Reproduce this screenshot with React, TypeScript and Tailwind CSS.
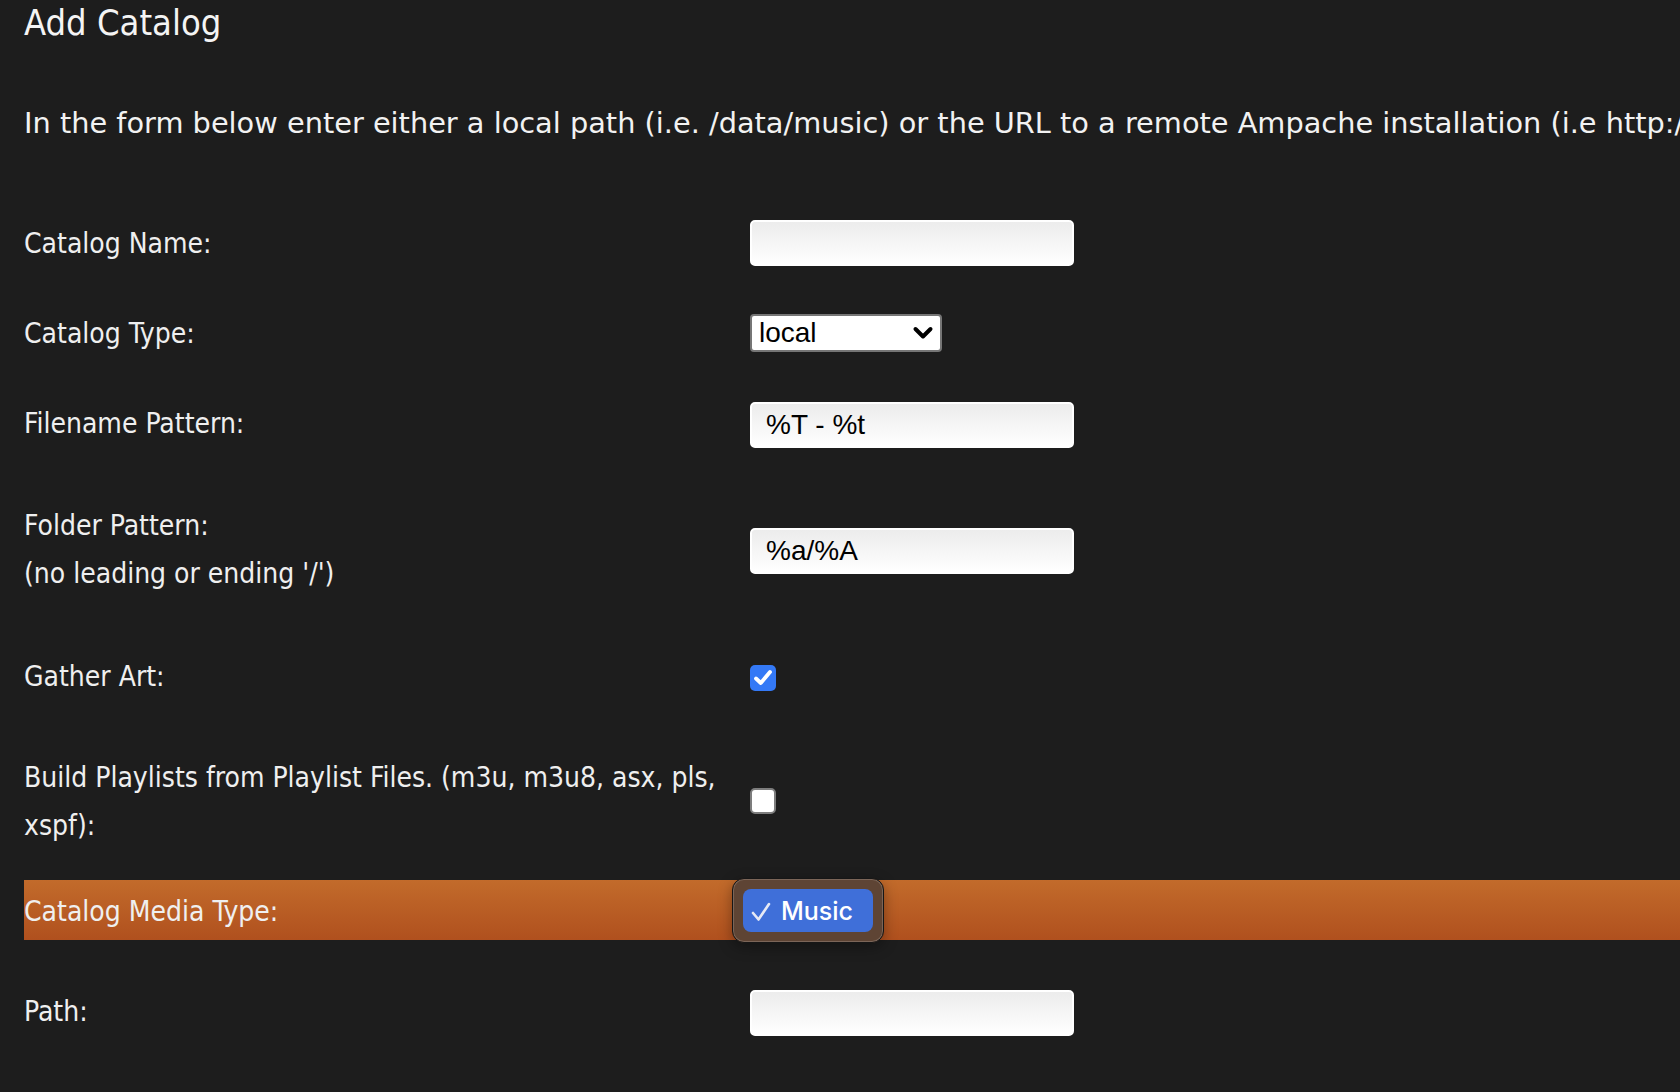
import React from 'react';

const labelFont = { fontFamily: '"DejaVu Sans Condensed", "DejaVu Sans", sans-serif' };
const bodyFont = { fontFamily: '"DejaVu Sans", sans-serif' };
const fieldFont = { fontFamily: '"Liberation Sans", Arial, sans-serif' };

const TextField: React.FC<{ value?: string; className?: string }> = ({ value = '', className = 'mt-[6px]' }) => (
  <div
    className={`w-[324px] h-[46px] rounded-[5px] border-2 border-white bg-gradient-to-b from-[#ececec] to-white px-[14px] flex items-center text-[28px] text-black ${className}`}
    style={fieldFont}
  >
    {value}
  </div>
);

const Row: React.FC<{ h: string; label: React.ReactNode; children?: React.ReactNode; highlight?: boolean }> = ({
  h,
  label,
  children,
  highlight,
}) => (
  <div
    className={`flex items-center ${h} ${highlight ? 'bg-gradient-to-b from-[#c26b2b] to-[#b0501e]' : ''}`}
  >
    <div className="w-[726px] shrink-0 mt-[4px] pr-[12px] text-[28px] leading-[48px] text-[#efefef]" style={labelFont}>
      {label}
    </div>
    <div className="flex items-center">{children}</div>
  </div>
);

export default function App() {
  return (
    <div className="w-full h-screen overflow-hidden bg-[#1d1d1d] pl-[24px]">
      {/* Title */}
      <h2 className="pt-[5px] text-[36px] leading-[35px] text-[#f4f4f4]" style={labelFont}>
        Add Catalog
      </h2>

      <p className="mt-[69px] whitespace-nowrap text-[28.8px] leading-[28px] text-[#f2f2f2]" style={bodyFont}>
        In the form below enter either a local path (i.e. /data/music) or the URL to a remote Ampache installation (i.e
        http://theotherampache.com)
      </p>

      <div className="mt-[60px] flex flex-col">
        <Row h="h-[90px]" label="Catalog Name:">
          <TextField className="mt-[2px]" />
        </Row>

        <Row h="h-[90px]" label="Catalog Type:">
          <div
            className="w-[192px] h-[38px] mt-[2px] rounded-[4px] border-2 border-[#767676] bg-white flex items-center justify-between pl-[7px] pr-[6px] text-[28px] text-black"
            style={fieldFont}
          >
            <span>local</span>
            <svg width="22" height="16" viewBox="0 0 22 16">
              <path d="M3.5 4 L11 11.5 L18.5 4" fill="none" stroke="#000" strokeWidth="4" strokeLinecap="round" strokeLinejoin="round" />
            </svg>
          </div>
        </Row>

        <Row h="h-[90px]" label="Filename Pattern:">
          <TextField value="%T - %t" />
        </Row>

        <Row
          h="h-[162px]"
          label={
            <>
              Folder Pattern:
              <br />
              (no leading or ending '/')
            </>
          }
        >
          <TextField value="%a/%A" />
        </Row>

        <Row h="h-[91px]" label="Gather Art:">
          <div className="w-[26px] h-[26px] mt-[6px] rounded-[5px] bg-[#3479f6] flex items-center justify-center">
            <svg width="22" height="22" viewBox="0 0 22 22">
              <path d="M4 11.5 L8.8 16 L18 5" fill="none" stroke="#fff" strokeWidth="3.8" strokeLinecap="round" strokeLinejoin="round" />
            </svg>
          </div>
        </Row>

        <Row h="h-[160px]" label="Build Playlists from Playlist Files. (m3u, m3u8, asx, pls, xspf):">
          <div className="w-[26px] h-[26px] mt-[2px] rounded-[5px] border-2 border-[#7d7d7d] bg-white" />
        </Row>

        <Row h="h-[60px]" label="Catalog Media Type:" highlight>
          <div className="-ml-[18px] w-[152px] h-[65px] rounded-[12px] border border-[#161616] bg-[#5e4434] p-[10px] shadow-[inset_0_0_0_1px_rgba(255,255,255,0.18),0_4px_14px_rgba(0,0,0,0.35)]">
            <div
              className="h-full rounded-[8px] bg-[#3f6fd9] flex items-center pl-[8px] pt-[3px] gap-[10px] text-[25px] font-medium text-white"
              style={{ fontFamily: 'Inter, "Liberation Sans", sans-serif' }}
            >
              <svg width="20" height="22" viewBox="0 0 20 22">
                <path d="M2 12 L7.5 18.5 L18 3" fill="none" stroke="#e6e9f5" strokeWidth="2.6" strokeLinecap="round" strokeLinejoin="round" />
              </svg>
              <span>Music</span>
            </div>
          </div>
        </Row>

        <Row h="h-[140px]" label="Path:">
          <TextField />
        </Row>
      </div>
    </div>
  );
}
